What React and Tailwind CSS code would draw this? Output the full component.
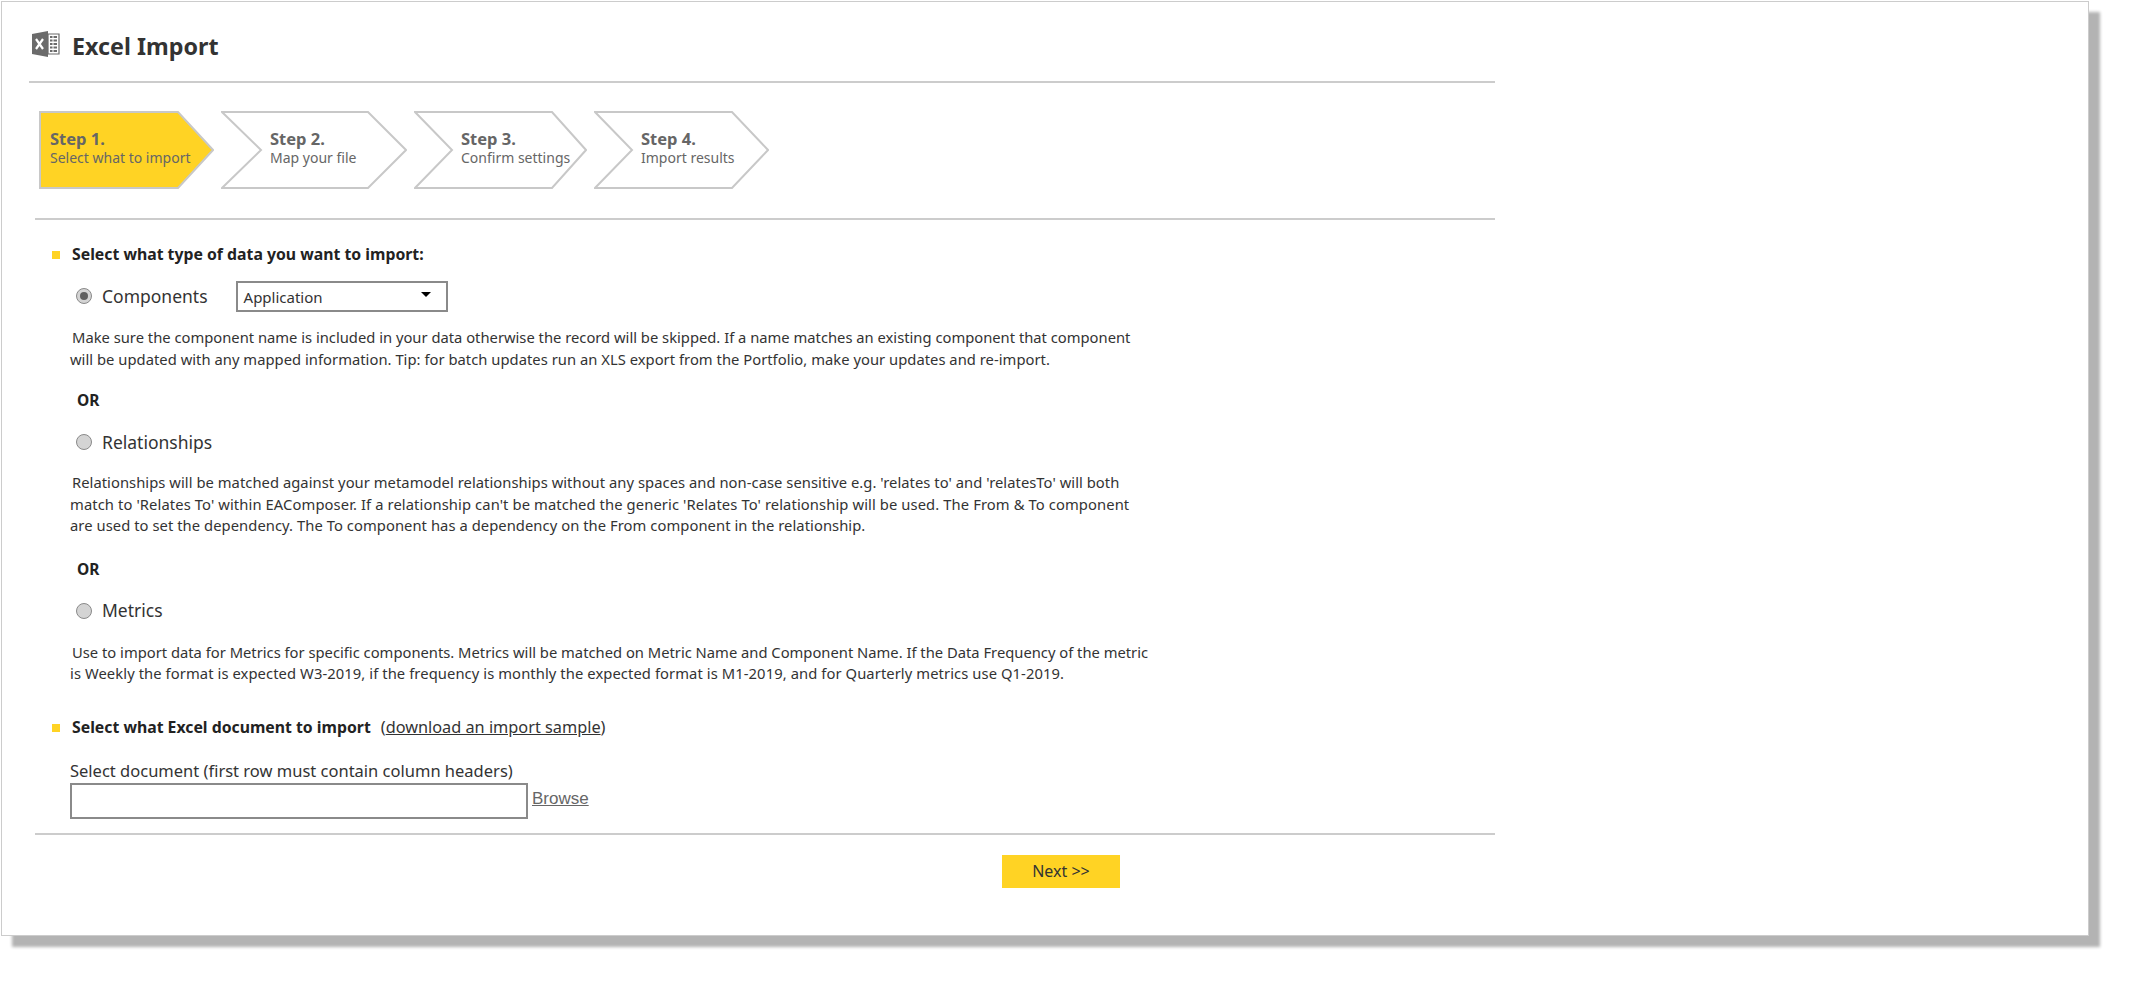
const bodyFont = "font-['Noto_Sans',sans-serif]";

const steps = [
  { title: 'Step 1.', label: 'Select what to import', width: 175, notch: 0, shoulder: 139, textLeft: 11, active: true },
  { title: 'Step 2.', label: 'Map your file', width: 186, notch: 39, shoulder: 147, textLeft: 49 },
  { title: 'Step 3.', label: 'Confirm settings', width: 173, notch: 37, shoulder: 138, textLeft: 47 },
  { title: 'Step 4.', label: 'Import results', width: 175, notch: 37, shoulder: 138, textLeft: 47 },
];

const ExcelIcon = () => (
  <svg width="28" height="26" viewBox="0 0 28 26" className="shrink-0">
    <path d="M0 3 L16 0 V26 L0 23 Z" fill="#6b6b6b" />
    <path d="M16 3 H27 V23 H16 Z" fill="#fff" stroke="#6b6b6b" strokeWidth="1.2" />
    <path d="M18 6 H25 M18 9.5 H25 M18 13 H25 M18 16.5 H25 M18 20 H25" stroke="#6b6b6b" strokeWidth="2" />
    <path d="M21 5 V21" stroke="#fff" strokeWidth="1" />
    <path d="M4 8 L11 18 M11 8 L4 18" stroke="#fff" strokeWidth="2.2" />
  </svg>
);

const StepShape = ({ step }) => {
  const { width, notch, shoulder, active } = step;
  const points = `1,1 ${shoulder},1 ${width - 1},39 ${shoulder},77 1,77 ${notch + 1},39`;
  return (
    <div className="relative h-[78px] shrink-0" style={{ width }}>
      <svg width={width} height="78" className="absolute inset-0">
        <polygon
          points={points}
          fill={active ? '#ffd324' : '#fff'}
          stroke="#c8c8c8"
          strokeWidth="2"
        />
      </svg>
      <div
        className="relative flex h-full flex-col justify-center pb-[4px] text-[14px] leading-[19px] text-[#666666]"
        style={{ paddingLeft: step.textLeft }}
      >
        <span className="text-[16.5px] font-bold">{step.title}</span>
        <span className="whitespace-nowrap">{step.label}</span>
      </div>
    </div>
  );
};

const Radio = ({ checked }) => (
  <span className="flex h-[16px] w-[16px] shrink-0 items-center justify-center rounded-full border border-[#8a8a8a] bg-[#d4d4d4]">
    {checked && <span className="h-[8px] w-[8px] rounded-full bg-[#5f5f5f]" />}
  </span>
);

const RadioRow = ({ checked, label, children }) => (
  <div className="flex h-[30px] items-center pl-[74px]">
    <Radio checked={checked} />
    <span className="ml-[10px] text-[17.5px] text-[#333333]">{label}</span>
    {children}
  </div>
);

// each line: [text, tracking class] so the line ends land where the picture has them
const Note = ({ lines }) => (
  <div className="pl-[68px] text-[14.75px] leading-[21.5px] text-[#333333]">
    {lines.map(([text, tracking], index) => (
      <div key={text} className={`whitespace-nowrap ${index === 0 ? 'pl-[2px]' : ''} ${tracking}`}>
        {text}
      </div>
    ))}
  </div>
);

const Or = ({ className }) => (
  <div className={`pl-[75px] text-[15.5px] font-bold leading-[20px] text-[#222222] ${className}`}>OR</div>
);

const Bullet = () => <span className="mr-[12px] h-[8px] w-[8px] shrink-0 bg-[#ffd324]" />;

const App = () => {
  return (
    <div className={`h-[1000px] w-full bg-white ${bodyFont}`}>
      <div className="absolute left-[1px] top-[1px] h-[935px] w-[2088px] border border-[#cccccc] bg-white shadow-[11px_11px_3px_#b3b3b3]">
        <div className="flex h-[79px] items-start pl-[30px] pt-[29px]">
          <ExcelIcon />
          <h1 className="ml-[12px] text-[23.3px] font-bold leading-[30px] text-[#333333]">Excel Import</h1>
        </div>
        <div className="ml-[27px] w-[1466px] border-t-2 border-[#cccccc]" />

        <div className="mt-[28px] flex gap-[7px] pl-[37px]">
          {steps.map((step) => (
            <StepShape key={step.title} step={step} />
          ))}
        </div>

        <div className="ml-[33px] mt-[29px] w-[1460px] border-t-2 border-[#cccccc]" />

        <div className="mt-[25px] flex h-[20px] items-center pl-[50px] text-[15.8px] font-bold text-[#222222]">
          <Bullet />
          Select what type of data you want to import:
        </div>

        <div className="mt-[16px]">
          <RadioRow checked label="Components">
            <div className="ml-[28px] flex h-[31px] w-[212px] items-center justify-between border-2 border-[#8a8a8a] pl-[6px] pr-[15px] text-[15px] text-[#333333]">
              <span className="pt-[2px]">Application</span>
              <span className="mb-[3px] h-0 w-0 border-x-[5px] border-t-[5px] border-x-transparent border-t-black" />
            </div>
          </RadioRow>
        </div>

        <div className="mt-[16px]">
          <Note
            lines={[
              ['Make sure the component name is included in your data otherwise the record will be skipped. If a name matches an existing component that component', ''],
              ['will be updated with any mapped information. Tip: for batch updates run an XLS export from the Portfolio, make your updates and re-import.', 'tracking-[0.03px]'],
            ]}
          />
        </div>

        <Or className="mt-[20px]" />
        <div className="mt-[17px]">
          <RadioRow label="Relationships" />
        </div>

        <div className="mt-[15px]">
          <Note
            lines={[
              ["Relationships will be matched against your metamodel relationships without any spaces and non-case sensitive e.g. 'relates to' and 'relatesTo' will both", 'tracking-[0.045px]'],
              ["match to 'Relates To' within EAComposer. If a relationship can't be matched the generic 'Relates To' relationship will be used. The From & To component", 'tracking-[0.1px]'],
              ['are used to set the dependency. The To component has a dependency on the From component in the relationship.', 'tracking-[0.06px]'],
            ]}
          />
        </div>

        <Or className="mt-[22px]" />
        <div className="mt-[17px]">
          <RadioRow label="Metrics" />
        </div>

        <div className="mt-[16px]">
          <Note
            lines={[
              ['Use to import data for Metrics for specific components. Metrics will be matched on Metric Name and Component Name. If the Data Frequency of the metric', ''],
              ['is Weekly the format is expected W3-2019, if the frequency is monthly the expected format is M1-2019, and for Quarterly metrics use Q1-2019.', 'tracking-[0.085px]'],
            ]}
          />
        </div>

        <div className="mt-[31px] flex h-[24px] items-center pl-[50px]">
          <Bullet />
          <span className="text-[15.8px] font-bold text-[#222222]">Select what Excel document to import</span>
          <span className="ml-[10px] text-[16.3px] text-[#333333]">
            (<span className="underline">download an import sample</span>)
          </span>
        </div>

        <div className="mt-[21px] pl-[68px] text-[16.5px] leading-[20px] text-[#333333]">
          Select document (first row must contain column headers)
        </div>
        <div className="mt-[2px] flex items-center pl-[68px]">
          <div className="h-[36px] w-[458px] border-2 border-[#8a8a8a] bg-white" />
          <span className="mb-[3px] ml-[4px] font-['Liberation_Sans',sans-serif] text-[17px] text-[#666666] underline">Browse</span>
        </div>

        <div className="ml-[33px] mt-[14px] w-[1460px] border-t-2 border-[#cccccc]" />

        <div className="mt-[20px] pl-[1000px]">
          <button className="h-[33px] w-[118px] bg-[#ffd324] text-[16px] text-[#333333]">Next &gt;&gt;</button>
        </div>
      </div>
    </div>
  );
};

export default App;
